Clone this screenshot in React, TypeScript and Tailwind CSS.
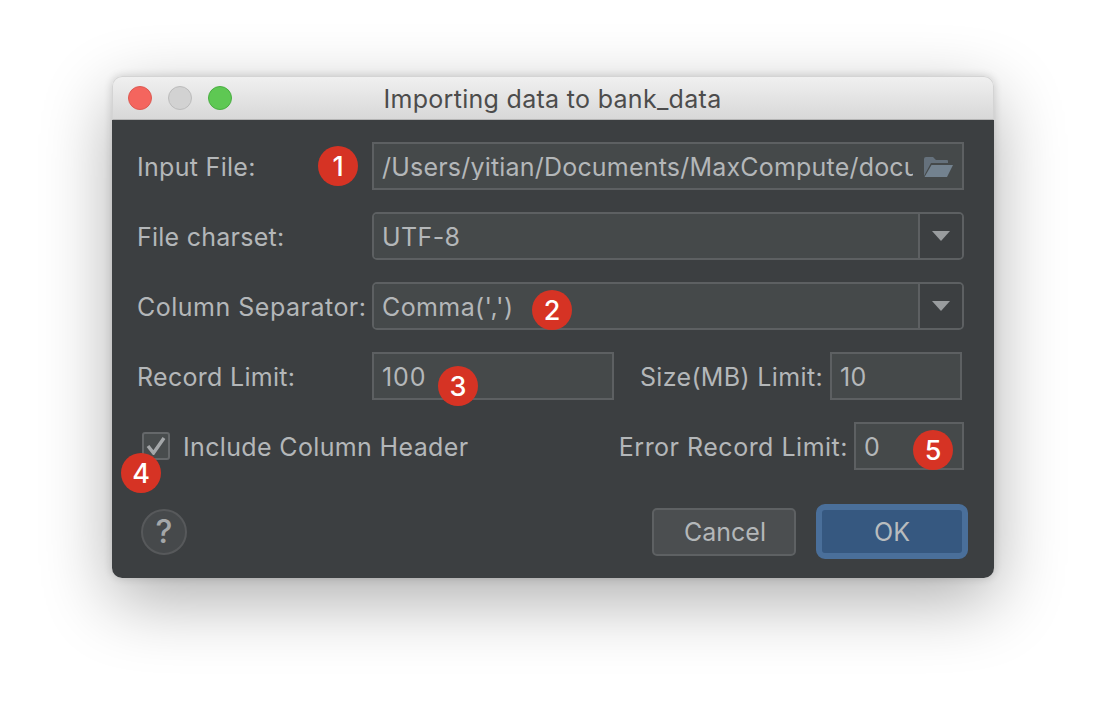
import React from "react";

const font = "font-['Inter','Liberation_Sans',sans-serif]";

function Badge({ n, className }: { n: string; className: string }) {
  return (
    <div className={`absolute flex h-10 w-10 items-center justify-center rounded-full bg-[#d63324] text-[27px] font-medium leading-none text-white ${className}`}>
      {n}
    </div>
  );
}

function Label({ children, className = "" }: { children: React.ReactNode; className?: string }) {
  return <span className={`whitespace-nowrap pt-[2px] text-[25px] leading-none text-[#b4b7b9] ${className}`}>{children}</span>;
}

function Field({ children, className = "" }: { children?: React.ReactNode; className?: string }) {
  return (
    <div className={`flex h-12 items-center overflow-hidden border-2 border-[#5d6062] bg-[#45494a] pl-[8px] pt-[2px] text-[25px] leading-none text-[#b4b7b9] ${className}`}>
      {children}
    </div>
  );
}

function Combo({ value }: { value: string }) {
  return (
    <div className="flex h-12 w-[592px] items-stretch overflow-hidden rounded-[5px] border-2 border-[#5d6062] text-[25px] leading-none tracking-[0.4px] text-[#b4b7b9]">
      <div className="flex flex-1 items-center border-r-2 border-[#5d6062] bg-[#45494a] pl-[8px] pt-[2px]">{value}</div>
      <div className="flex w-[42px] items-center justify-center bg-[#3c3f41]">
        <svg width="18" height="10" viewBox="0 0 18 10"><path d="M0 0h18L9 10z" fill="#999c9e" /></svg>
      </div>
    </div>
  );
}

export default function App() {
  return (
    <div className={`flex h-[726px] w-[1106px] items-start justify-start overflow-hidden bg-white pl-[112px] pt-[76px] ${font}`}>
      <div className="relative h-[502px] w-[882px] rounded-[10px] shadow-[0_22px_70px_rgba(0,0,0,0.32),0_0_8px_rgba(0,0,0,0.16)]">
        <div className="relative flex h-11 items-center justify-center rounded-t-[10px] border border-b-[#b5b5b5] border-[#d4d4d4] bg-gradient-to-b from-[#f0f0f0] to-[#d8d8d8]">
          <div className="absolute left-[15px] top-[9px] flex gap-[16px]">
            <span className="h-6 w-6 rounded-full border border-[#dd5a52] bg-[#f4655e]" />
            <span className="h-6 w-6 rounded-full border border-[#bcbcbc] bg-[#d2d2d2]" />
            <span className="h-6 w-6 rounded-full border border-[#4aae42] bg-[#5ec853]" />
          </div>
          <span className="mr-[1px] pt-[2px] text-[25px] leading-none tracking-[0.3px] text-[#4c4c4c]">Importing data to bank_data</span>
        </div>
        <div className="flex h-[458px] flex-col rounded-b-[10px] bg-[#3c3f41] pl-[25px] pr-[30px] pt-[22px]">
          <div className="flex flex-col gap-[22px]">
            <div className="flex items-center">
              <Label className="w-[235px] tracking-[0.3px]">Input File:</Label>
              <Field className="w-[592px] pr-[9px] tracking-[0.2px]">
                <span className="min-w-0 flex-1 overflow-hidden whitespace-nowrap">/Users/yitian/Documents/MaxCompute/docu</span>
                <svg className="ml-[10px] shrink-0" width="30" height="22" viewBox="0 0 30 22">
                  <path d="M1 3a2 2 0 0 1 2-2h7l3 3h11a1 1 0 0 1 1 1v2H8L1 20z" fill="#65717c" />
                  <path d="M8.5 9H30l-6 12H1.5z" fill="#73828f" />
                </svg>
              </Field>
            </div>
            <div className="flex items-center">
              <Label className="w-[235px] tracking-[0.25px]">File charset:</Label>
              <Combo value="UTF-8" />
            </div>
            <div className="flex items-center">
              <Label className="w-[235px] tracking-[0.5px]">Column Separator:</Label>
              <Combo value="Comma(',')" />
            </div>
            <div className="flex items-center">
              <Label className="w-[235px] tracking-[0.3px]">Record Limit:</Label>
              <Field className="w-[242px] tracking-[0.9px]">100</Field>
              <Label className="ml-auto mr-[7px] tracking-[0.35px]">Size(MB) Limit:</Label>
              <Field className="mr-[2px] w-[132px] tracking-[0.4px]">10</Field>
            </div>
            <div className="flex items-center">
              <div className="ml-[5px] flex h-7 w-7 items-center justify-center rounded-[3px] border-2 border-[#65686a] bg-[#484c4d]">
                <svg width="20" height="18" viewBox="0 0 20 18"><path d="M2 9l5.5 7L18 1" fill="none" stroke="#a4a7a9" strokeWidth="3.4" /></svg>
              </div>
              <Label className="ml-[13px] tracking-[0.35px]">Include Column Header</Label>
              <Label className="ml-auto mr-[6px] tracking-[0.5px]">Error Record Limit:</Label>
              <Field className="w-[110px] tracking-[0.4px]">0</Field>
            </div>
          </div>
          <div className="mt-[34px] flex items-center">
            <div className="ml-[4px] flex h-[46px] w-[46px] items-center justify-center rounded-full border-2 border-[#57595b] bg-[#46494b] text-[32px] font-medium leading-none text-[#a4a7a9]">?</div>
            <div className="ml-auto flex h-12 w-[144px] items-center justify-center rounded-[5px] border-2 border-[#5e6163] bg-[#4b4e50] pl-[2px] pt-[2px] text-[25px] leading-none text-[#b4b7b9]">Cancel</div>
            <div className="ml-[20px] mr-[-4px] flex h-[55px] w-[152px] items-center justify-center rounded-[9px] border-[6px] border-[#4a6f9a] bg-[#365880] pt-[2px] text-[25px] leading-none text-[#b9bcbe]">OK</div>
          </div>
        </div>
        <Badge n="1" className="left-[206px] top-[70px]" />
        <Badge n="2" className="left-[420px] top-[214px]" />
        <Badge n="3" className="left-[326px] top-[290px]" />
        <Badge n="4" className="left-[9px] top-[377px]" />
        <Badge n="5" className="left-[801px] top-[354px]" />
      </div>
    </div>
  );
}
